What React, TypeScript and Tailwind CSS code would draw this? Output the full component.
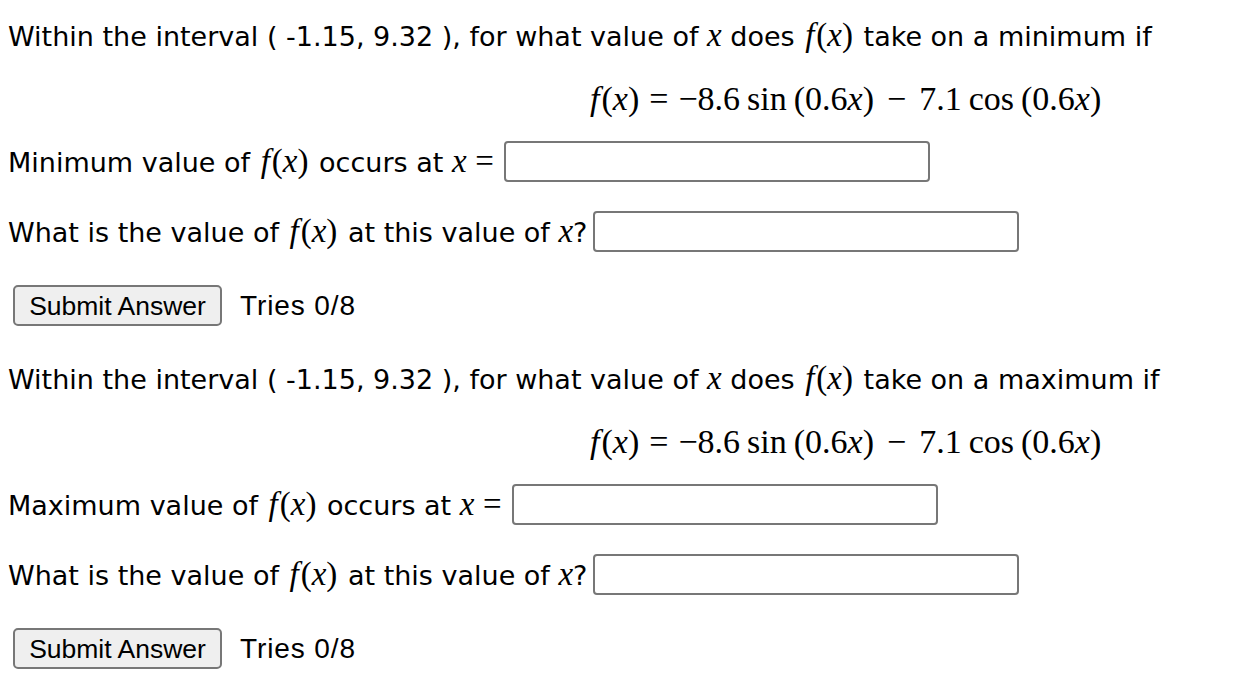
import React from "react";

const M = ({ children }: { children: React.ReactNode }) => (
  <span className="font-['Liberation_Serif',serif] italic text-[33px]">{children}</span>
);
const R = ({ children, className = "" }: { children: React.ReactNode; className?: string }) => (
  <span className={"font-['Liberation_Serif',serif] text-[33px] " + className}>{children}</span>
);

const Fx = () => (
  <span className="mx-[2px]">
    <M>f</M>
    <R className="ml-[2px]">(</R>
    <M>x</M>
    <R>)</R>
  </span>
);

function Block({ kind }: { kind: "minimum" | "maximum" }) {
  const label = kind === "minimum" ? "Minimum" : "Maximum";
  return (
    <div className="flex flex-col">
      <div className="h-10 flex items-center whitespace-nowrap">
        <span>
          Within the interval ( -1.15, 9.32 ), for what value of <M>x</M> does <Fx /> take on a {kind} if
        </span>
      </div>
      <div className="h-10 mt-[22px] flex items-center pl-[582px] whitespace-nowrap font-['Liberation_Serif',serif] text-[34px] text-black">
        <span className="italic">f</span>
        <span className="ml-[2px]">(</span>
        <span className="italic">x</span>
        <span>)</span>
        <span className="mx-[10px]">=</span>
        <span>−8.6</span>
        <span className="ml-[7px]">sin</span>
        <span className="ml-[7px]">(0.6</span>
        <span className="italic">x</span>
        <span>)</span>
        <span className="mx-[13px]">−</span>
        <span>7.1</span>
        <span className="ml-[7px]">cos</span>
        <span className="ml-[7px]">(0.6</span>
        <span className="italic">x</span>
        <span>)</span>
      </div>
      <div className="h-[41px] mt-[23px] flex items-center whitespace-nowrap">
        <span>
          {label} value of <Fx /> occurs at <M>x</M> <R>=</R>
        </span>
        <input className="ml-[10px] w-[426px] h-[41px] border-2 border-[#777] rounded-[4px] bg-white" />
      </div>
      <div className="h-[41px] mt-[29px] flex items-center whitespace-nowrap">
        <span>
          What is the value of <Fx /> at this value of <M>x</M>?
        </span>
        <input className="ml-[6px] w-[426px] h-[41px] border-2 border-[#777] rounded-[4px] bg-white" />
      </div>
      <div className="h-[41px] mt-[33px] flex items-center whitespace-nowrap font-['Liberation_Sans',Arial,sans-serif]">
        <button className="ml-[5px] w-[209px] h-[41px] border-2 border-[#777] rounded-[5px] bg-[#efefef] text-black text-[26.5px]">
          Submit Answer
        </button>
        <span className="ml-[18px] text-[28px] tracking-[0.9px]">Tries 0/8</span>
      </div>
    </div>
  );
}

export default function App() {
  return (
    <div className="w-[1242px] h-[688px] overflow-hidden bg-white text-black pl-2 pt-4 font-['DejaVu_Sans',sans-serif] text-[27px]">
      <Block kind="minimum" />
      <div className="mt-[33px]">
        <Block kind="maximum" />
      </div>
    </div>
  );
}
